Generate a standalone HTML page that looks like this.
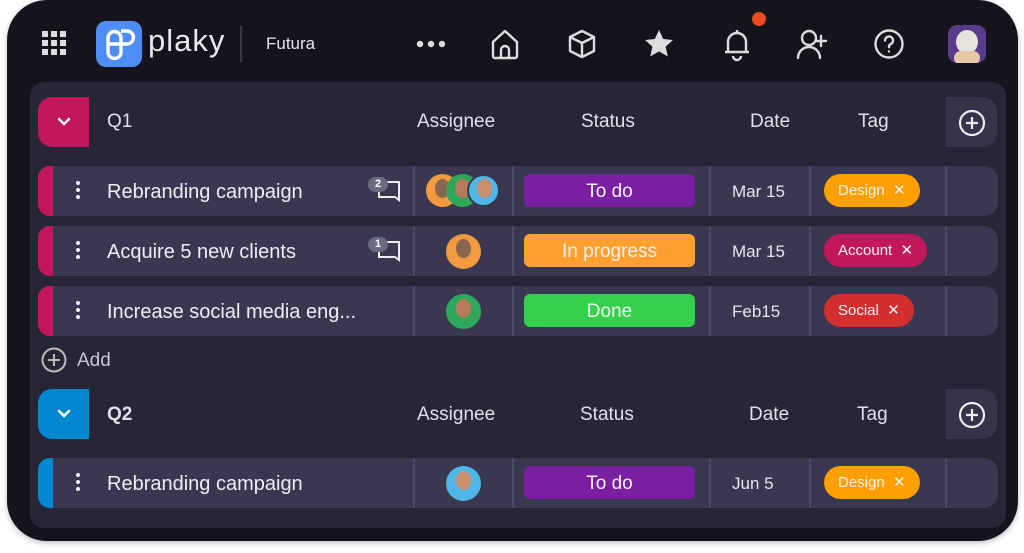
<!DOCTYPE html><html><head><meta charset="utf-8"><style>
*{margin:0;padding:0;box-sizing:border-box}
body{width:1024px;height:553px;background:#fff;font-family:"Liberation Sans",Roboto,sans-serif;position:relative;overflow:hidden;color:#e6e6ee}
.frame{position:absolute;left:7px;top:0;width:1011px;height:541px;background:#15141d;border-radius:40px;box-shadow:0 2px 6px rgba(0,0,0,.25)}
.panel{position:absolute;left:30px;top:82px;width:976px;height:446px;background:#272636;border-radius:14px}
.a{position:absolute}
.hdr{font-size:19px;color:#e0e0e8}
.sq{position:absolute;left:38px;width:51px;height:50px;border-radius:14px 0 0 14px}
.row{position:absolute;left:38px;width:960px;height:50px;background:#393850;border-radius:12px 14px 14px 12px;overflow:hidden}
.bar{position:absolute;left:0;top:0;width:15px;height:50px}
.sep{position:absolute;top:0;width:2px;height:50px;background:#4b4a66}
.t{position:absolute;left:69px;top:15px;font-size:20px;color:#eeeef4}
.dots{position:absolute;left:38px;top:15px;width:4px}
.dots i{display:block;width:4px;height:4px;background:#eee;border-radius:2px;margin-bottom:3px}
.pill{position:absolute;left:486px;top:8px;width:171px;height:33px;border-radius:6px;font-size:19px;text-align:center;line-height:36px;color:#f2f2f2}
.date{position:absolute;left:694px;top:16px;font-size:17px;color:#e6e6ee}
.tag{position:absolute;left:786px;top:8px;height:33px;border-radius:17px;font-size:15px;line-height:34px;padding:0 14px;color:#f3f3f3}
.av{position:absolute;width:33px;height:33px;border-radius:50%;top:8px}
.plus{position:absolute;left:946px;width:51px;height:50px;background:#35344a;border-radius:0 14px 14px 0}
</style></head><body>
<div class="frame"></div>
<div class="panel"></div>
<svg class="a" style="left:42px;top:31px" width="26" height="26"><g fill="#ddd"><rect x="0" y="0" width="6" height="6"/><rect x="9" y="0" width="6" height="6"/><rect x="18" y="0" width="6" height="6"/><rect x="0" y="9" width="6" height="6"/><rect x="9" y="9" width="6" height="6"/><rect x="18" y="9" width="6" height="6"/><rect x="0" y="18" width="6" height="6"/><rect x="9" y="18" width="6" height="6"/><rect x="18" y="18" width="6" height="6"/></g></svg>
<div class="a" style="left:96px;top:21px;width:46px;height:46px;background:#4e8df5;border-radius:10px"></div>
<svg class="a" style="left:96px;top:21px" width="46" height="46"><g fill="none" stroke="#fff" stroke-width="3.4"><path d="M12 23 V17 a6.5 6.5 0 0 1 13 0 V23 H31 a6.5 6.5 0 0 0 0 -13 H25"/><path d="M12 23 V31 a6.5 6.5 0 0 0 13 0 V23 H12"/></g></svg>
<div class="a" style="left:148px;top:23px;font-size:31px;color:#e8e8ee;letter-spacing:1px">plaky</div>
<div class="a" style="left:240px;top:26px;width:2px;height:36px;background:#3a3948"></div>
<div class="a" style="left:266px;top:34px;font-size:17px;color:#e6e6ee">Futura</div>
<svg class="a" style="left:416px;top:40px" width="30" height="8"><g fill="#ddd"><circle cx="4" cy="4" r="3.2"/><circle cx="15" cy="4" r="3.2"/><circle cx="26" cy="4" r="3.2"/></g></svg>
<svg class="a" style="left:490px;top:28px" width="30" height="32" fill="none" stroke="#ddd" stroke-width="2.4" stroke-linejoin="round"><path d="M3 14 L15 3 L27 14 V28 a2 2 0 0 1-2 2 H5 a2 2 0 0 1-2-2Z"/><path d="M11 30 V22 a4 4 0 0 1 8 0 V30"/></svg>
<svg class="a" style="left:567px;top:28px" width="30" height="32" fill="none" stroke="#ddd" stroke-width="2.4" stroke-linejoin="round"><path d="M15 3 L27 9 V23 L15 29 L3 23 V9Z"/><path d="M3 9 L15 15 L27 9 M15 15 V29"/></svg>
<svg class="a" style="left:643px;top:28px" width="32" height="32"><path fill="#ddd" d="M16 2 L20.2 11 L30 12 L22.6 18.6 L24.8 28.5 L16 23.4 L7.2 28.5 L9.4 18.6 L2 12 L11.8 11Z"/></svg>
<svg class="a" style="left:722px;top:28px" width="30" height="34" fill="none" stroke="#ddd" stroke-width="2.4" stroke-linejoin="round"><path d="M15 2 V5 M6 24 V14 a9 9 0 0 1 18 0 V24 Z M3 24 H27 M11 28 a4 4 0 0 0 8 0"/></svg>
<div class="a" style="left:752px;top:12px;width:14px;height:14px;border-radius:50%;background:#e84b1c"></div>
<svg class="a" style="left:796px;top:28px" width="32" height="32" fill="none" stroke="#ddd" stroke-width="2.4" stroke-linecap="round"><circle cx="13" cy="10" r="7"/><path d="M2 30 a11 11 0 0 1 22 0 M25 8 v10 M20 13 h10"/></svg>
<svg class="a" style="left:873px;top:28px" width="32" height="32" fill="none" stroke="#ddd" stroke-width="2.4" stroke-linecap="round"><circle cx="16" cy="16" r="13.5"/><path d="M12 12.5 a4 4 0 1 1 5.5 3.7 c-1.3.6-1.5 1.3-1.5 3"/><circle cx="16" cy="23.5" r="1.2" fill="#ddd" stroke="none"/></svg>
<div class="a" style="left:948px;top:25px;width:38px;height:38px;border-radius:9px;background:#5a3a8a;overflow:hidden"><div class="a" style="left:8px;top:5px;width:22px;height:24px;border-radius:50%;background:#e8e2dc"></div><div class="a" style="left:6px;top:26px;width:26px;height:14px;border-radius:8px;background:#e8c6a8"></div></div>

<div class="sq" style="top:97px;background:#c2185b"></div>
<svg class="a" style="left:56px;top:116px" width="16" height="12" fill="none" stroke="#fff" stroke-width="2.4" stroke-linecap="round"><path d="M3 3 L8 8 L13 3"/></svg>
<div class="a hdr" style="left:107px;top:111px">Q1</div>
<div class="a hdr" style="left:417px;top:111px">Assignee</div>
<div class="a hdr" style="left:581px;top:111px">Status</div>
<div class="a hdr" style="left:750px;top:111px">Date</div>
<div class="a hdr" style="left:858px;top:111px">Tag</div>
<div class="plus" style="top:97px"></div>
<svg class="a" style="left:958px;top:109px" width="28" height="28" fill="none" stroke="#eee" stroke-width="2.2"><circle cx="14" cy="14" r="12"/><path d="M14 8 V20 M8 14 H20"/></svg>

<div class="row" style="top:166px"><div class="bar" style="background:#c2185b"></div><div class="dots"><i></i><i></i><i></i></div><div class="t">Rebranding campaign</div>
<svg class="a" style="left:337px;top:12px" width="28" height="28" fill="none" stroke="#eee" stroke-width="2"><path d="M8 4 H24 V22 L20 19 H4 V10"/></svg>
<div class="a" style="left:330px;top:11px;width:20px;height:15px;border-radius:8px;background:#6b6a85;font-size:11px;text-align:center;line-height:15px;color:#fff;font-weight:bold">2</div>
<div class="sep" style="left:375px"></div><div class="sep" style="left:474px"></div><div class="sep" style="left:671px"></div><div class="sep" style="left:771px"></div><div class="sep" style="left:907px"></div>
<div class="av" style="left:388px;background:#f19a3e"><div class="a" style="left:9px;top:5px;width:15px;height:19px;border-radius:50%;background:#8a6650"></div></div>
<div class="av" style="left:408px;background:#2ea85a"><div class="a" style="left:9px;top:5px;width:15px;height:19px;border-radius:50%;background:#b87a5a"></div></div>
<div class="av" style="left:429px;background:#4fb6e8;border:2px solid #393850"><div class="a" style="left:8px;top:3px;width:15px;height:19px;border-radius:50%;background:#c98e6b"></div></div>
<div class="pill" style="background:#7b1fa2">To do</div><div class="date">Mar 15</div><div class="tag" style="background:#ffa000">Design &nbsp;✕</div></div>

<div class="row" style="top:226px"><div class="bar" style="background:#c2185b"></div><div class="dots"><i></i><i></i><i></i></div><div class="t">Acquire 5 new clients</div>
<svg class="a" style="left:337px;top:12px" width="28" height="28" fill="none" stroke="#eee" stroke-width="2"><path d="M8 4 H24 V22 L20 19 H4 V10"/></svg>
<div class="a" style="left:330px;top:11px;width:20px;height:15px;border-radius:8px;background:#6b6a85;font-size:11px;text-align:center;line-height:15px;color:#fff;font-weight:bold">1</div>
<div class="sep" style="left:375px"></div><div class="sep" style="left:474px"></div><div class="sep" style="left:671px"></div><div class="sep" style="left:771px"></div><div class="sep" style="left:907px"></div>
<div class="av" style="left:408px;background:#f19a3e;width:35px;height:35px"><div class="a" style="left:10px;top:5px;width:15px;height:19px;border-radius:50%;background:#8a6650"></div></div>
<div class="pill" style="background:#ffa030">In progress</div><div class="date">Mar 15</div><div class="tag" style="background:#c2185b">Account &nbsp;✕</div></div>

<div class="row" style="top:286px"><div class="bar" style="background:#c2185b"></div><div class="dots"><i></i><i></i><i></i></div><div class="t">Increase social media eng...</div>
<div class="sep" style="left:375px"></div><div class="sep" style="left:474px"></div><div class="sep" style="left:671px"></div><div class="sep" style="left:771px"></div><div class="sep" style="left:907px"></div>
<div class="av" style="left:408px;background:#2ea85a;width:35px;height:35px"><div class="a" style="left:10px;top:5px;width:15px;height:19px;border-radius:50%;background:#b87a5a"></div></div>
<div class="pill" style="background:#33d14c">Done</div><div class="date">Feb15</div><div class="tag" style="background:#d32f2f">Social &nbsp;✕</div></div>

<svg class="a" style="left:41px;top:347px" width="26" height="26" fill="none" stroke="#bbb" stroke-width="2"><circle cx="13" cy="13" r="11.5"/><path d="M13 7 V19 M7 13 H19"/></svg>
<div class="a" style="left:77px;top:350px;font-size:19px;color:#c8c8d0">Add</div>

<div class="sq" style="top:389px;background:#0288d1"></div>
<svg class="a" style="left:56px;top:408px" width="16" height="12" fill="none" stroke="#fff" stroke-width="2.4" stroke-linecap="round"><path d="M3 3 L8 8 L13 3"/></svg>
<div class="a hdr" style="left:107px;top:404px;font-weight:bold">Q2</div>
<div class="a hdr" style="left:417px;top:404px">Assignee</div>
<div class="a hdr" style="left:580px;top:404px">Status</div>
<div class="a hdr" style="left:749px;top:404px">Date</div>
<div class="a hdr" style="left:857px;top:404px">Tag</div>
<div class="plus" style="top:389px"></div>
<svg class="a" style="left:958px;top:401px" width="28" height="28" fill="none" stroke="#eee" stroke-width="2.2"><circle cx="14" cy="14" r="12"/><path d="M14 8 V20 M8 14 H20"/></svg>

<div class="row" style="top:458px"><div class="bar" style="background:#0288d1"></div><div class="dots"><i></i><i></i><i></i></div><div class="t">Rebranding campaign</div>
<div class="sep" style="left:375px"></div><div class="sep" style="left:474px"></div><div class="sep" style="left:671px"></div><div class="sep" style="left:771px"></div><div class="sep" style="left:907px"></div>
<div class="av" style="left:408px;background:#4fb6e8;width:35px;height:35px"><div class="a" style="left:10px;top:5px;width:15px;height:19px;border-radius:50%;background:#c98e6b"></div></div>
<div class="pill" style="background:#7b1fa2">To do</div><div class="date">Jun 5</div><div class="tag" style="background:#ffa000">Design &nbsp;✕</div></div>
</body></html>
